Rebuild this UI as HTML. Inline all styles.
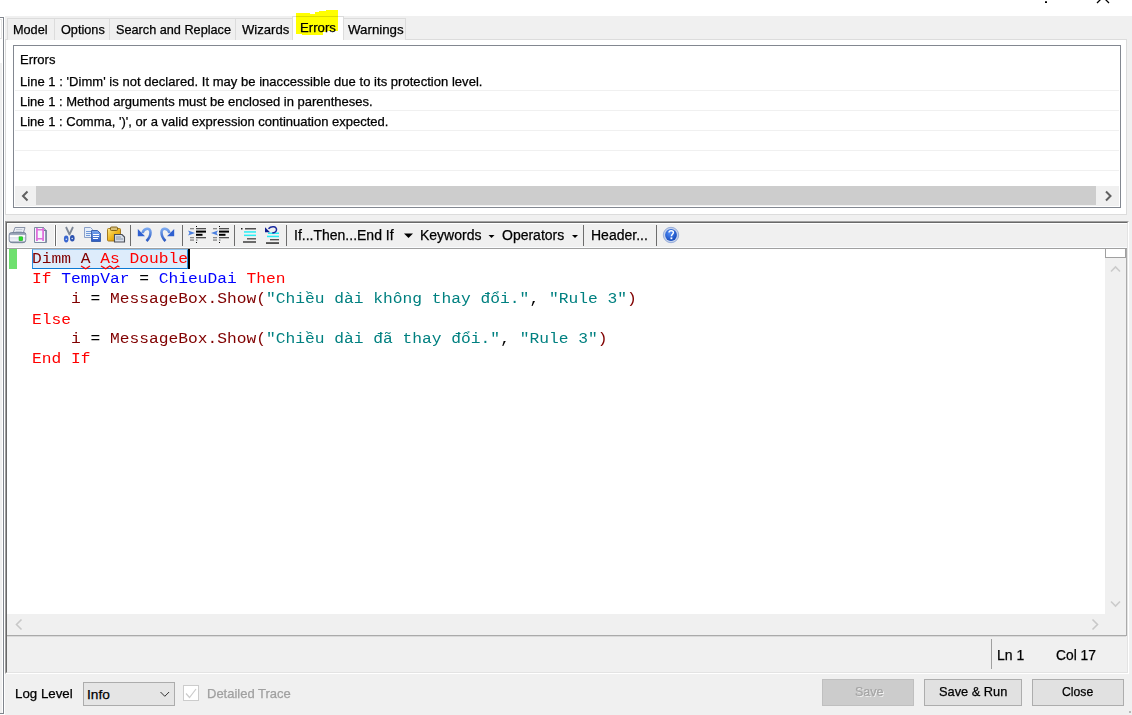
<!DOCTYPE html>
<html><head><meta charset="utf-8">
<style>
*{box-sizing:border-box;margin:0;padding:0}
html,body{width:1132px;height:715px;overflow:hidden;background:#fff;font-family:"Liberation Sans",sans-serif;color:#000}
.a{position:absolute}
.t{position:absolute;white-space:pre;line-height:1;-webkit-text-stroke:0.25px currentColor}
</style></head><body>
<!-- top window chrome remnants -->
<div class="a" style="left:1045px;top:1px;width:2px;height:2px;border-radius:1px 1px 0 0;background:#000"></div>
<svg class="a" style="left:1094px;top:-6px" width="18" height="10"><path d="M3,9 L9,3 L15,9" stroke="#000" stroke-width="1.3" fill="none"/></svg>

<!-- left frame -->
<div class="a" style="left:-10px;top:17px;width:14px;height:697px;border:1px solid #80858d;background:#fff"></div>
<div class="a" style="left:-10px;top:19px;width:12px;height:20px;border:1px solid #e3e3e3;background:#fff"></div>
<div class="a" style="left:0;top:63px;width:2px;height:650px;background:#f0f0f0"></div>

<!-- main gray dialog -->
<div class="a" style="left:5px;top:16px;width:1127px;height:699px;background:#f0f0f0"></div>

<!-- tab page -->
<div class="a" style="left:5px;top:39px;width:1122px;height:176px;border:1px solid #dcdcdc;background:#fff"></div>
<!-- tabs -->
<div class="a" style="left:7px;top:18px;width:48px;height:22px;border:1px solid #dcdcdc;border-bottom:0;background:#f0f0f0"></div>
<div class="a" style="left:54px;top:18px;width:56px;height:22px;border:1px solid #dcdcdc;border-bottom:0;background:#f0f0f0"></div>
<div class="a" style="left:109px;top:18px;width:127px;height:22px;border:1px solid #dcdcdc;border-bottom:0;background:#f0f0f0"></div>
<div class="a" style="left:235px;top:18px;width:58px;height:22px;border:1px solid #dcdcdc;border-bottom:0;background:#f0f0f0"></div>
<div class="a" style="left:343px;top:18px;width:63px;height:22px;border:1px solid #dcdcdc;border-bottom:0;background:#f0f0f0"></div>
<div class="a" style="left:292px;top:16px;width:52px;height:24px;border:1px solid #dcdcdc;border-bottom:0;background:#fff"></div>
<div class="t" style="left:13px;top:24px;font-size:12.7px">Model</div>
<div class="t" style="left:61px;top:24px;font-size:12.7px">Options</div>
<div class="t" style="left:116px;top:24px;font-size:12.7px">Search and Replace</div>
<div class="t" style="left:242px;top:23px;font-size:13.1px">Wizards</div>
<div class="t" style="left:300px;top:21px;font-size:13.2px">Errors</div>
<div class="t" style="left:348px;top:23px;font-size:13.3px">Warnings</div>
<svg class="a" style="left:290px;top:8px;mix-blend-mode:multiply" width="52" height="30"><path d="M6,5 H20 V6 H25 V4 H29 V3 H36 V2 H48 V23 H37 V24 H33 V27 H12 V26 H6 Z" fill="#ffff00"/></svg>

<!-- listbox -->
<div class="a" style="left:13px;top:45px;width:1108px;height:163px;border:1px solid #828790;background:#fff"></div>
<div class="a" style="left:15px;top:90px;width:1104px;height:1px;background:#f0f0f0"></div>
<div class="a" style="left:15px;top:110px;width:1104px;height:1px;background:#f0f0f0"></div>
<div class="a" style="left:15px;top:130px;width:1104px;height:1px;background:#f0f0f0"></div>
<div class="a" style="left:15px;top:150px;width:1104px;height:1px;background:#f0f0f0"></div>
<div class="a" style="left:15px;top:170px;width:1104px;height:1px;background:#f0f0f0"></div>
<div class="t" style="left:20px;top:53px;font-size:13px">Errors</div>
<div class="t" style="left:20px;top:75px;font-size:13px;letter-spacing:0.036px">Line 1 : 'Dimm' is not declared. It may be inaccessible due to its protection level.</div>
<div class="t" style="left:20px;top:95px;font-size:13px">Line 1 : Method arguments must be enclosed in parentheses.</div>
<div class="t" style="left:20px;top:115px;font-size:13px">Line 1 : Comma, ')', or a valid expression continuation expected.</div>
<!-- listbox h-scrollbar -->
<div class="a" style="left:15px;top:186px;width:1104px;height:20px;background:#f0f0f0"></div>
<div class="a" style="left:36px;top:186px;width:1060px;height:19px;background:#cdcdcd"></div>
<svg class="a" style="left:15px;top:186px" width="21" height="20"><path d="M12.5,5.5 L8,10 L12.5,14.5" stroke="#606060" stroke-width="2" fill="none"/></svg>
<svg class="a" style="left:1096px;top:186px" width="23" height="20"><path d="M10,5.5 L14.5,10 L10,14.5" stroke="#606060" stroke-width="2" fill="none"/></svg>

<!-- editor frame -->
<div class="a" style="left:5px;top:221px;width:1124px;height:453px;border-top:1px solid #a0a0a0;border-left:1px solid #a0a0a0;border-right:1px solid #fff;border-bottom:1px solid #fff"></div>
<div class="a" style="left:6px;top:222px;width:1122px;height:451px;border-top:1px solid #696969;border-left:1px solid #696969;border-right:1px solid #e3e3e3;border-bottom:1px solid #e3e3e3"></div>
<!-- toolbar -->
<div class="a" style="left:7px;top:223px;width:1120px;height:25px;background:#f0f0f0;border-top:1px solid #fff;border-left:1px solid #fff;border-bottom:1px solid #fafcfe"></div>
<div class="a" style="left:7px;top:248px;width:1120px;height:1px;background:#a0a0a0"></div>
<!-- toolbar content -->
<svg class="a" style="left:0;top:220px" width="700" height="30" viewBox="0 220 700 30">
<defs>
<linearGradient id="blu" x1="0" y1="0" x2="0" y2="1"><stop offset="0" stop-color="#7aa8f0"/><stop offset="1" stop-color="#2a58c0"/></linearGradient>
<linearGradient id="gold" x1="0" y1="0" x2="1" y2="1"><stop offset="0" stop-color="#fce98a"/><stop offset="0.5" stop-color="#f0b820"/><stop offset="1" stop-color="#c88a00"/></linearGradient>
<radialGradient id="hb" cx="0.4" cy="0.35" r="0.7"><stop offset="0" stop-color="#4f8cf8"/><stop offset="1" stop-color="#1346b8"/></radialGradient>
</defs>
<g fill="#fff"><rect x="54" y="225" width="1" height="21"/><rect x="56" y="225" width="1" height="21"/></g>
<g fill="#6d6d6d">
<rect x="55" y="225" width="1" height="21"/><rect x="130" y="225" width="1" height="21"/><rect x="182" y="225" width="1" height="21"/>
<rect x="234" y="225" width="1" height="21"/><rect x="286" y="225" width="1" height="21"/><rect x="583" y="225" width="1" height="21"/><rect x="656" y="225" width="1" height="21"/>
</g>
<!-- printer -->
<defs>
<linearGradient id="pb" x1="0" y1="0" x2="0" y2="1"><stop offset="0" stop-color="#8a96ac"/><stop offset="0.25" stop-color="#a8b2c4"/><stop offset="0.3" stop-color="#ffffff"/><stop offset="0.4" stop-color="#ffffff"/><stop offset="0.45" stop-color="#dde3ee"/><stop offset="0.8" stop-color="#eef1f8"/><stop offset="1" stop-color="#6a788f"/></linearGradient>
<linearGradient id="sb" x1="0" y1="0" x2="1" y2="1"><stop offset="0" stop-color="#b0b8c8"/><stop offset="1" stop-color="#5a6a88"/></linearGradient>
</defs>
<path d="M12.8,234 L15,227.5 H25 L23,234 Z" fill="#e9ecf3" stroke="#8a94a8" stroke-width="1"/>
<path d="M16,229.6 H22.3 M15.5,231.6 H21.8" stroke="#c0c6d4" stroke-width="1"/>
<path d="M11.5,232.5 H24 Q25.8,232.5 25.8,234.5 V240 Q25.8,242.7 23,242.7 H12 Q9.2,242.7 9.2,240 V235 Q9.2,232.5 11.5,232.5 Z" fill="url(#pb)" stroke="#75829a" stroke-width="0.9"/>
<rect x="19" y="236.8" width="3.7" height="3.9" fill="#28e028" stroke="#1a9a1a" stroke-width="0.5"/>
<!-- page setup -->
<path d="M34.5,227.5 H43.5 L46.5,230.5 V242.5 H34.5 Z" fill="#f4f8fc" stroke="#7f8ca2" stroke-width="1"/>
<path d="M43.5,227.5 V230.5 H46.5" fill="#aab4c4" stroke="#6f7c92" stroke-width="1"/>
<g fill="#e070dc"><rect x="36" y="228" width="1.8" height="13"/><rect x="42.2" y="228" width="1.8" height="13"/><rect x="36" y="229" width="8" height="1.5"/><rect x="36" y="238" width="8" height="1.5"/></g><rect x="45" y="231" width="1" height="11" fill="#8e9ab0"/>
<!-- scissors -->
<path d="M66,227 L69.8,235 M73,227 L69.2,235" stroke="#7c8696" stroke-width="1.8"/>
<ellipse cx="66.2" cy="239" rx="2.3" ry="3.4" fill="#3a66d0"/>
<ellipse cx="72.3" cy="238.2" rx="2.3" ry="3.3" fill="#2d52b0"/>
<circle cx="66.3" cy="239.3" r="0.8" fill="#dfe8f8"/><circle cx="72.2" cy="238.5" r="0.8" fill="#dfe8f8"/>
<!-- copy -->
<path d="M84.5,227.5 H90.5 L92.5,229.5 V237.5 H84.5 Z" fill="#e6eefa" stroke="#8aa0c8" stroke-width="1"/>
<path d="M86,231.5 H91 M86,233.5 H91 M86,235.5 H90" stroke="#6f98d8" stroke-width="1"/>
<path d="M91.5,230.5 H97.5 L100.5,233.5 V241.5 H91.5 Z" fill="url(#blu)" stroke="#3d64b0" stroke-width="1"/>
<path d="M93,234.5 H99 M93,236.5 H99 M93,238.5 H98" stroke="#fff" stroke-width="1"/>
<!-- paste -->
<rect x="107.5" y="228.5" width="13" height="12.5" rx="1" fill="url(#gold)" stroke="#a47a20" stroke-width="1"/>
<rect x="110.5" y="227" width="7" height="3.5" rx="1" fill="#d8c078" stroke="#7a5a10" stroke-width="0.9"/>
<path d="M114.5,234.5 H122 L124.5,237 V242 H114.5 Z" fill="#d8dfea" stroke="#4a4f58" stroke-width="1.1"/>
<path d="M116,237 H121 M116,239 H123" stroke="#8894a8" stroke-width="1"/>
<!-- undo -->
<path d="M142.5,233 C144,228 150.5,227 150.5,232.5 C150.5,236 148.5,239 146.5,241" fill="none" stroke="url(#blu)" stroke-width="2.6"/>
<path d="M137.8,229 L137.8,236.3 L145,236.3 Z" fill="#2f60d0"/>
<!-- redo -->
<path d="M169.5,233 C168,228 161.5,227 161.5,232.5 C161.5,236 163.5,239 165.5,241" fill="none" stroke="url(#blu)" stroke-width="2.6"/>
<path d="M174.2,229 L174.2,236.3 L167,236.3 Z" fill="#2f60d0"/>
<!-- indent -->
<rect x="196" y="226" width="1" height="1" fill="#000"/>
<rect x="190" y="228" width="4" height="1.3" fill="#8a8a8a"/>
<rect x="196" y="228" width="10" height="1.3" fill="#505050"/>
<rect x="196" y="230.6" width="10" height="2" fill="#000"/>
<rect x="196" y="233.8" width="6.5" height="2" fill="#000"/>
<rect x="190" y="237" width="4" height="1.3" fill="#8a8a8a"/>
<rect x="196" y="237" width="10" height="1.3" fill="#505050"/>
<rect x="190" y="239.3" width="4" height="1.6" fill="#9a9a9a"/>
<rect x="196" y="239.3" width="1.5" height="1.6" fill="#9a9a9a"/>
<rect x="196" y="242" width="1" height="1" fill="#000"/>
<path d="M188,230.5 L195,233 L188,235.5 L189.5,233 Z" fill="#4a7fe0"/>
<rect x="219" y="226" width="1" height="1" fill="#000"/>
<rect x="213" y="228" width="4" height="1.3" fill="#8a8a8a"/>
<rect x="219" y="228" width="10" height="1.3" fill="#505050"/>
<rect x="219" y="230.6" width="10" height="2" fill="#000"/>
<rect x="219" y="233.8" width="6.5" height="2" fill="#000"/>
<rect x="213" y="237" width="4" height="1.3" fill="#8a8a8a"/>
<rect x="219" y="237" width="10" height="1.3" fill="#505050"/>
<rect x="213" y="239.3" width="4" height="1.6" fill="#9a9a9a"/>
<rect x="219" y="239.3" width="1.5" height="1.6" fill="#9a9a9a"/>
<rect x="219" y="242" width="1" height="1" fill="#000"/>
<path d="M218,230.5 L211,233 L218,235.5 L216.5,233 Z" fill="#4a7fe0"/>
<!-- comment -->
<rect x="241" y="228" width="1.5" height="1.5" fill="#222"/>
<rect x="245" y="228.2" width="11" height="1.2" fill="#2a2a2a"/>
<rect x="244" y="231.2" width="12" height="1.5" fill="#28eef4"/>
<rect x="244" y="234.6" width="12" height="1.5" fill="#28eef4"/>
<rect x="247" y="238.1" width="9" height="1.4" fill="#555"/>
<rect x="243" y="241.3" width="13" height="1.4" fill="#333"/>
<rect x="268" y="232.5" width="11" height="1.5" fill="#28eef4"/>
<rect x="267" y="235.7" width="12" height="1.5" fill="#28eef4"/>
<rect x="270" y="239" width="9" height="1.4" fill="#555"/>
<rect x="266" y="242.3" width="13" height="1.5" fill="#2a2a2a"/>
<path d="M268.5,228.8 C271,225.8 277,226 276.5,230 C276.2,232.3 273.5,233 272.3,232.8" fill="none" stroke="#1a2aa0" stroke-width="1.5"/>
<path d="M265,227.3 L265,232.3 L270,232.3 Z" fill="#101e90"/>
<!-- help -->
<circle cx="671" cy="235" r="7.7" fill="#c6d3ec" stroke="#7d98d0" stroke-width="0.7"/>
<circle cx="671" cy="235" r="5.9" fill="url(#hb)"/>
<path d="M669,232.6 C669,230.2 673.4,230.2 673.4,232.5 C673.4,234.1 671.4,234.4 671.4,236.2" fill="none" stroke="#fff" stroke-width="1.5"/>
<rect x="670.5" y="237.4" width="1.8" height="1.8" fill="#fff"/>
<!-- dropdown arrows -->
<path d="M404,233.5 H413 L408.5,238 Z" fill="#000"/>
<path d="M488.5,235 H494.5 L491.5,238 Z" fill="#000"/>
<path d="M572,235 H578 L575,238 Z" fill="#000"/>
</svg>
<div class="t" style="left:294px;top:228px;font-size:14px">If...Then...End If</div>
<div class="t" style="left:420px;top:228px;font-size:14px">Keywords</div>
<div class="t" style="left:502px;top:228px;font-size:14px">Operators</div>
<div class="t" style="left:591px;top:228px;font-size:14px">Header...</div>
<!-- text area -->
<div class="a" style="left:7px;top:249px;width:1118px;height:365px;background:#fff"></div>
<!-- code -->
<div class="a" style="left:9px;top:249px;width:8px;height:20px;background:#6ee06e"></div>
<div class="a" style="left:32px;top:249px;width:156px;height:20px;background:#ddecfb;border:1px solid #2c8ee0;border-top-color:#8cc0ec;border-bottom-color:#0a78d4"></div>
<div class="a" style="left:188px;top:249px;width:2px;height:20px;background:#000"></div>
<div class="code" style="position:absolute;left:32px;top:250px;font-family:'Liberation Mono',monospace;font-size:16.25px;line-height:22.857px;transform:scale(1,0.875);transform-origin:0 0;white-space:pre;color:#000"><span style="color:#800000">Dimm A </span><span style="color:#f00">As Double</span>
<span style="color:#f00">If</span> <span style="color:#00f">TempVar</span> = <span style="color:#00f">ChieuDai</span> <span style="color:#f00">Then</span>
    <span style="color:#800000">i</span> = <span style="color:#800000">MessageBox.Show(</span><span style="color:#008080">"Chiều dài không thay đổi."</span>, <span style="color:#008080">"Rule 3"</span><span style="color:#800000">)</span>
<span style="color:#f00">Else</span>
    <span style="color:#800000">i</span> = <span style="color:#800000">MessageBox.Show(</span><span style="color:#008080">"Chiều dài đã thay đổi."</span>, <span style="color:#008080">"Rule 3"</span><span style="color:#800000">)</span>
<span style="color:#f00">End If</span></div>
<svg class="a" style="left:80px;top:264px" width="42" height="6"><path d="M1,2 L5.8,4.8 L10,2 M21,2 L25.8,4.8 L29.8,2 L33.8,4.8 L37.8,2 L39.5,3" stroke="#f00" stroke-width="1.2" fill="none"/></svg>
<!-- v scrollbar -->
<div class="a" style="left:1105px;top:249px;width:21px;height:365px;background:#f0f0f0"></div>
<div class="a" style="left:1105px;top:249px;width:21px;height:9px;background:#fff;border:1px solid #a0a0a0;border-top:0"></div>
<svg class="a" style="left:1105px;top:258px" width="21" height="20"><path d="M6,13.5 L10.5,9 L15,13.5" stroke="#cbcbcb" stroke-width="1.6" fill="none"/></svg>
<svg class="a" style="left:1105px;top:594px" width="21" height="20"><path d="M6,7.5 L10.5,12 L15,7.5" stroke="#cbcbcb" stroke-width="1.6" fill="none"/></svg>
<!-- h scrollbar -->
<div class="a" style="left:7px;top:614px;width:1119px;height:21px;background:#f0f0f0"></div>
<svg class="a" style="left:7px;top:614px" width="21" height="21"><path d="M14.5,5.5 L9.5,10.5 L14.5,15.5" stroke="#c8c8c8" stroke-width="1.6" fill="none"/></svg>
<svg class="a" style="left:1084px;top:614px" width="21" height="21"><path d="M8.5,5.5 L13.5,10.5 L8.5,15.5" stroke="#c8c8c8" stroke-width="1.6" fill="none"/></svg>
<div class="a" style="left:7px;top:635px;width:1119px;height:1px;background:#aaaaaa"></div>
<div class="a" style="left:7px;top:636px;width:1119px;height:1px;background:#dadada"></div>
<div class="a" style="left:1126px;top:249px;width:1px;height:387px;background:#aaaaaa"></div>
<!-- status bar -->
<div class="a" style="left:991px;top:639px;width:1px;height:30px;background:#a0a0a0"></div>
<div class="t" style="left:997px;top:648px;font-size:14px">Ln 1</div>
<div class="t" style="left:1056px;top:649px;font-size:13.8px">Col 17</div>

<!-- bottom panel -->
<div class="t" style="left:15px;top:687px;font-size:13.3px">Log Level</div>
<div class="a" style="left:83px;top:682px;width:92px;height:24px;background:#e5e5e5;border:1px solid #acacac"></div>
<div class="t" style="left:87px;top:688px;font-size:13.7px">Info</div>
<svg class="a" style="left:158px;top:688px" width="14" height="12"><path d="M2.5,4 L6.8,8.3 L11.1,4" stroke="#303030" stroke-width="1" fill="none"/></svg>
<div class="a" style="left:183px;top:685px;width:16px;height:16px;background:#fff;border:1px solid #cccccc"></div>
<svg class="a" style="left:183px;top:685px" width="16" height="17"><path d="M3,8.5 L6.5,12.5 L13,4" stroke="#cccccc" stroke-width="1.2" fill="none"/></svg>
<div class="t" style="left:207px;top:687px;font-size:13px;color:#a0a0a0">Detailed Trace</div>
<div class="a" style="left:822px;top:679px;width:92px;height:27px;background:#cccccc;border:1px solid #bfbfbf"></div>
<div class="t" style="left:855px;top:686px;font-size:12.5px;color:#a6a6a6;text-shadow:1px 1px 0 #f4f4f4">Save</div>
<div class="a" style="left:924px;top:679px;width:98px;height:27px;background:#e1e1e1;border:1px solid #adadad"></div>
<div class="t" style="left:939px;top:686px;font-size:12.8px">Save &amp; Run</div>
<div class="a" style="left:1032px;top:679px;width:92px;height:27px;background:#e1e1e1;border:1px solid #adadad"></div>
<div class="t" style="left:1062px;top:686px;font-size:12.2px">Close</div>

<div class="a" style="left:1129px;top:711px;width:2px;height:2px;background:#b8b8b8"></div>
</body></html>
